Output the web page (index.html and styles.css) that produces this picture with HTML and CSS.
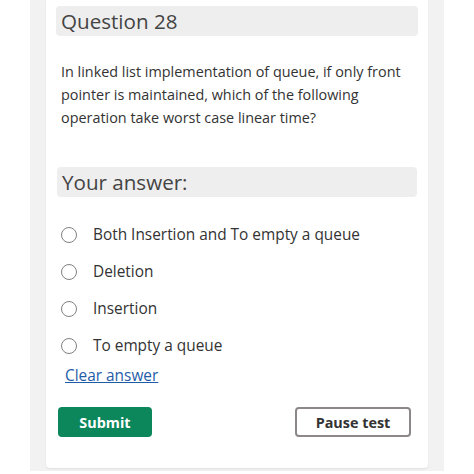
FILE: index.html
```html
<!DOCTYPE html>
<html lang="en">
<head>
    <meta charset="UTF-8">
    <meta name="viewport" content="width=device-width, initial-scale=1.0">
    <title>Question 28</title>
    <link rel="stylesheet" href="styles.css">
</head>
<body>
    <div class="band">
        <div class="card">
            <h2 class="box-title">Question 28</h2>
            <p class="question-text">
                In linked list implementation of queue, if only front pointer is maintained, which of the following operation take worst case linear time?
            </p>

            <h2 class="box-title answer-title">Your answer:</h2>

            <div class="options">
                <label class="option"><span class="radio"></span>Both Insertion and To empty a queue</label>
                <label class="option"><span class="radio"></span>Deletion</label>
                <label class="option"><span class="radio"></span>Insertion</label>
                <label class="option"><span class="radio"></span>To empty a queue</label>
            </div>

            <a href="#" class="clear-link">Clear answer</a>

            <div class="actions">
                <button class="btn btn-submit">Submit</button>
                <button class="btn btn-pause">Pause test</button>
            </div>
        </div>
    </div>
</body>
</html>
```

FILE: styles.css
```css
* {
    margin: 0;
    padding: 0;
    box-sizing: border-box;
}

body {
    font-family: 'Open Sans', 'Noto Sans', sans-serif;
    background: #ffffff;
    color: #333;
}

.band {
    width: 414px;
    margin-left: 30px;
    background: #f2f2f2;
    padding: 0 16px 3px;
}

.card {
    background: #ffffff;
    padding: 6px 10px 31px;
    border-radius: 0 0 4px 4px;
    box-shadow: 0 1px 2px rgba(0, 0, 0, 0.08);
}

.box-title {
    background: #eeeeee;
    border-radius: 4px;
    height: 30px;
    line-height: 30px;
    padding-left: 5px;
    font-size: 20.6px;
    font-weight: 400;
    color: #444;
}

.question-text {
    margin-top: 24px;
    padding: 0 10px 0 5px;
    font-size: 14.4px;
    line-height: 23px;
    color: #333;
}

.answer-title {
    margin-top: 38px;
    margin-left: 1px;
    margin-right: 1px;
}

.options {
    margin-top: 19px;
}

.option {
    display: flex;
    align-items: center;
    height: 37px;
    padding-left: 5px;
    font-size: 15.4px;
    color: #333;
    cursor: pointer;
}

.radio {
    width: 16px;
    height: 16px;
    border: 1.5px solid #808080;
    border-radius: 50%;
    margin-right: 16px;
    flex-shrink: 0;
}

.clear-link {
    display: inline-block;
    margin-left: 9px;
    line-height: 24px;
    font-size: 15.4px;
    color: #1f5ca8;
    text-decoration: underline;
}

.actions {
    display: flex;
    justify-content: space-between;
    margin-top: 19px;
    padding: 0 7px 0 2px;
}

.btn {
    height: 30px;
    border-radius: 4px;
    font-family: 'Open Sans', 'Noto Sans', sans-serif;
    font-size: 14.4px;
    font-weight: 700;
    cursor: pointer;
}

.btn-submit {
    width: 94px;
    background: #0b875b;
    color: #ffffff;
    border: none;
}

.btn-pause {
    width: 116px;
    background: #ffffff;
    color: #333;
    border: 2px solid #8c8888;
}
```
